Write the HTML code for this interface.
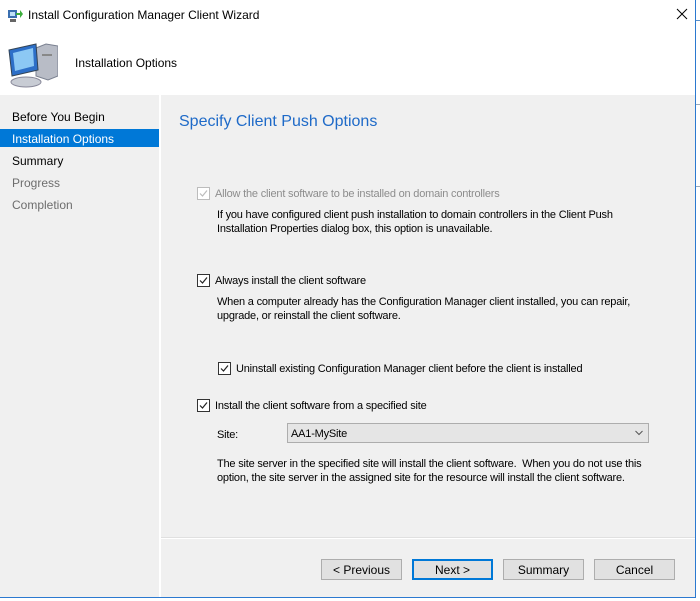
<!DOCTYPE html>
<html><head><style>
body{margin:0;width:700px;height:601px;position:relative;overflow:hidden;background:#fff;font-family:"Liberation Sans",sans-serif;}
.a{position:absolute;white-space:nowrap;}
.t{font-size:11px;letter-spacing:-0.2px;color:#000;}
.cb{position:absolute;width:11px;height:11px;border:1px solid #333;background:#fff;}
.cb svg{position:absolute;left:1px;top:1px}
.btn{position:absolute;top:559px;height:21px;width:81px;border:1px solid #adadad;background:#e1e1e1;font-size:12px;text-align:center;line-height:21px;box-sizing:border-box;}
</style></head><body>
<div class="a" style="left:0;top:0;width:695px;height:597px;background:#fff"></div>
<div class="a" style="left:695px;top:0;width:1px;height:598px;background:#2b79d0"></div>
<div class="a" style="left:0;top:597px;width:696px;height:1px;background:#2b79d0"></div>
<div class="a" style="left:696px;top:20px;width:4px;height:1px;background:#5a8fc8"></div>
<div class="a" style="left:696px;top:104px;width:4px;height:1px;background:#9ab"></div>
<div class="a" style="left:696px;top:186px;width:4px;height:1px;background:#9ab"></div>
<!-- title -->
<svg class="a" style="left:7px;top:7px" width="16" height="16"><rect x="1" y="3" width="9" height="8" fill="#3a6fb0"/><rect x="3" y="5" width="5" height="4" fill="#bfe0f8"/><rect x="3" y="12" width="6" height="3" fill="#666"/><path d="M9 6h4v-3l3 4-3 4v-3h-4z" fill="#3cae3c"/></svg>
<div class="a" style="left:28px;top:8px;font-size:12px">Install Configuration Manager Client Wizard</div>
<svg class="a" style="left:676px;top:8px" width="12" height="12"><path d="M1 1L11 11M11 1L1 11" stroke="#000" stroke-width="1"/></svg>
<!-- header icon -->
<svg class="a" style="left:6px;top:40px" width="52" height="48">
<path d="M30 8L40 4L52 6L52 36L42 40L30 36Z" fill="#b8bcc6" stroke="#7a8090"/><rect x="36" y="14" width="10" height="2" fill="#888"/>
<path d="M3 10L30 4L32 30L6 36Z" fill="#2d6fc8" stroke="#345"/><path d="M7 13L27 8L28 26L9 31Z" fill="#8cc8f4"/>
<ellipse cx="20" cy="42" rx="15" ry="5" fill="#c8ccd4" stroke="#889"/>
</svg>
<div class="a" style="left:75px;top:56px;font-size:12px">Installation Options</div>
<!-- body -->
<div class="a" style="left:0;top:95px;width:695px;height:502px;background:#f0f0f0"></div>
<div class="a" style="left:159px;top:95px;width:2px;height:502px;background:#fff"></div>
<div class="a" style="left:161px;top:538px;width:534px;height:1px;background:#fff"></div>
<div class="a" style="left:161px;top:537px;width:534px;height:1px;background:#e0e0e0"></div>
<div class="a" style="left:12px;top:110px;font-size:12px">Before You Begin</div>
<div class="a" style="left:0;top:129px;width:159px;height:18px;background:#0078d7"></div>
<div class="a" style="left:12px;top:132px;font-size:12px;color:#fff">Installation Options</div>
<div class="a" style="left:12px;top:154px;font-size:12px">Summary</div>
<div class="a" style="left:12px;top:176px;font-size:12px;color:#6d6d6d">Progress</div>
<div class="a" style="left:12px;top:198px;font-size:12px;color:#6d6d6d">Completion</div>
<div class="a" style="left:179px;top:113px;font-size:16px;color:#1e6ac8">Specify Client Push Options</div>

<div class="cb" style="left:197px;top:187px;border-color:#bcbcbc"><svg width="9" height="9"><path d="M1 4.5L3.5 7L8 1.5" fill="none" stroke="#bcbcbc" stroke-width="1.2"/></svg></div>
<div class="a t" style="left:215px;top:188px;color:#8d8d8d">Allow the client software to be installed on domain controllers</div>
<div class="a t" style="left:217px;top:209px">If you have configured client push installation to domain controllers in the Client Push</div>
<div class="a t" style="left:217px;top:223px">Installation Properties dialog box, this option is unavailable.</div>

<div class="cb" style="left:197px;top:274px"><svg width="9" height="9"><path d="M1 4.5L3.5 7L8 1.5" fill="none" stroke="#222" stroke-width="1.2"/></svg></div>
<div class="a t" style="left:215px;top:275px">Always install the client software</div>
<div class="a t" style="left:217px;top:296px">When a computer already has the Configuration Manager client installed, you can repair,</div>
<div class="a t" style="left:217px;top:310px">upgrade, or reinstall the client software.</div>

<div class="cb" style="left:218px;top:362px"><svg width="9" height="9"><path d="M1 4.5L3.5 7L8 1.5" fill="none" stroke="#222" stroke-width="1.2"/></svg></div>
<div class="a t" style="left:236px;top:363px">Uninstall existing Configuration Manager client before the client is installed</div>

<div class="cb" style="left:197px;top:399px"><svg width="9" height="9"><path d="M1 4.5L3.5 7L8 1.5" fill="none" stroke="#222" stroke-width="1.2"/></svg></div>
<div class="a t" style="left:215px;top:400px">Install the client software from a specified site</div>
<div class="a t" style="left:217px;top:429px">Site:</div>
<div class="a" style="left:287px;top:423px;width:362px;height:20px;border:1px solid #adadad;background:#e5e5e5;box-sizing:border-box"></div>
<div class="a t" style="left:291px;top:428px">AA1-MySite</div>
<svg class="a" style="left:635px;top:430px" width="8" height="6"><path d="M0.5 1L4 4.5L7.5 1" fill="none" stroke="#555"/></svg>
<div class="a t" style="left:217px;top:458px">The site server in the specified site will install the client software.&nbsp; When you do not use this</div>
<div class="a t" style="left:217px;top:472px">option, the site server in the assigned site for the resource will install the client software.</div>

<div class="btn" style="left:321px">&lt; Previous</div>
<div class="btn" style="left:412px;border:2px solid #0078d7;line-height:19px">Next &gt;</div>
<div class="btn" style="left:503px">Summary</div>
<div class="btn" style="left:594px">Cancel</div>
</body></html>
